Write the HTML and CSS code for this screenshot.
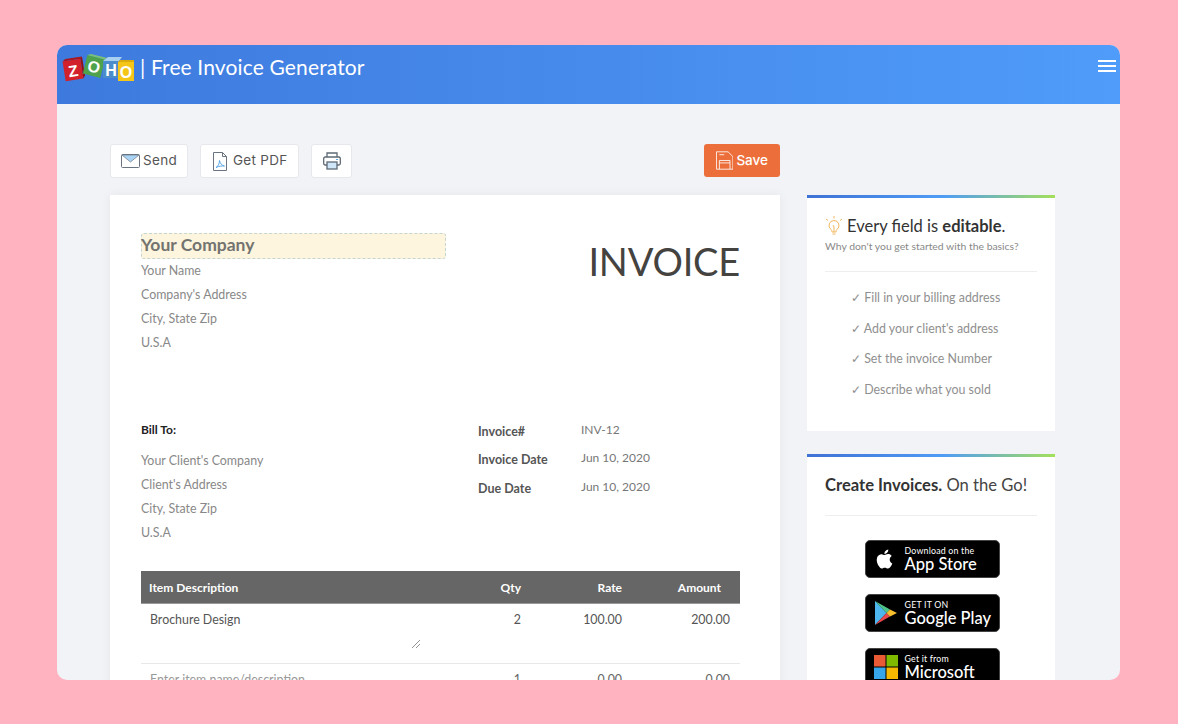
FILE: index.html
```html
<!DOCTYPE html>
<html lang="en">
<head>
<meta charset="utf-8">
<title>Free Invoice Generator</title>
<link rel="stylesheet" href="styles.css">
</head>
<body>
<div class="window">
  <header class="topbar">
    <div class="brand">
      <svg class="logo" width="72" height="30" viewBox="0 0 72 30">
        <g transform="rotate(-9 11 17)"><rect x="2" y="7" width="18" height="20" fill="#d3212c"/><path d="M2 7l3-2h17l-2 2z" fill="#a9161f"/><path d="M20 7l2-2v19l-2 3z" fill="#8f1219"/><text x="11" y="23.500" class="lt">Z</text></g>
        <g transform="rotate(14 32 13)"><rect x="23" y="4" width="18" height="19" fill="#4ea24c"/><path d="M23 4l3-2h17l-2 2z" fill="#7cc178"/><text x="32" y="19.500" class="lt">O</text></g>
        <rect x="41" y="8" width="16" height="17" fill="#4b8ccb"/><path d="M41 8l5-4h14l-3 4z" fill="#a8d0f0"/><text x="49" y="22.500" class="lt">H</text>
        <rect x="56" y="9" width="16" height="19" fill="#f5c518"/><path d="M56 9l2-2h14v2z" fill="#d9ab0d"/><text x="64" y="25" class="lt">O</text>
      </svg>
      <span class="product">| Free Invoice Generator</span>
    </div>
    <div class="burger"><i></i><i></i><i></i></div>
  </header>

  <main class="content">
    <div class="toolbar">
      <div class="actions">
        <button class="btn">
          <svg width="19" height="14" viewBox="0 0 19 14"><rect x=".5" y=".5" width="18" height="13" rx="1" fill="#fff" stroke="#6a7480"/><path d="M1 1l8.500 7L18 1z" fill="#a9d4f5" stroke="#6a7480" stroke-width=".7"/></svg>
          <span class="btn-label">Send</span>
        </button>
        <button class="btn btn-pdf">
          <svg width="14" height="19" viewBox="0 0 14 19"><path d="M.5.5h9l4 4v14H.5z" fill="#fff" stroke="#6a7480"/><path d="M9.500.5v4h4" fill="none" stroke="#6a7480"/><path d="M3 15.500c2-1 3.500-4 3.500-7 .5 3 2.500 5 5 5.500-2-.2-5.500 0-8.500 1.500z" fill="none" stroke="#5aa7e6"/></svg>
          <span class="btn-label">Get PDF</span>
        </button>
        <button class="btn btn-print" aria-label="Print">
          <svg width="18" height="18" viewBox="0 0 18 18"><path d="M4 5V1h10v4" fill="none" stroke="#5f6974" stroke-width="1.300"/><rect x=".7" y="5" width="16.600" height="8" rx="1.500" fill="#fff" stroke="#5f6974" stroke-width="1.300"/><rect x="4" y="10" width="10" height="7" fill="#cfe6f8" stroke="#5f6974" stroke-width="1.300"/><path d="M13 7.500h2" stroke="#5aa7e6"/></svg>
        </button>
      </div>
      <button class="btn-save">
        <svg width="18" height="19" viewBox="0 0 18 19"><path d="M.5.5h12l5 5v13H.5z" fill="none" stroke="#fff" stroke-opacity=".85"/><path d="M3.500 3.500h5" stroke="#fff" stroke-opacity=".85"/><path d="M3.500 18.500v-9h11v9M3.500 12h11" fill="none" stroke="#fff" stroke-opacity=".85"/></svg>
        <span class="btn-label">Save</span>
      </button>
    </div>

    <div class="columns">
      <article class="sheet">
        <section class="sheet-top">
          <div class="from">
            <div class="company">Your Company</div>
            <p>Your Name</p>
            <p>Company's Address</p>
            <p>City, State Zip</p>
            <p>U.S.A</p>
          </div>
          <h1 class="doc-title">INVOICE</h1>
        </section>

        <section class="sheet-mid">
          <div class="bill">
            <h2>Bill To:</h2>
            <p>Your Client's Company</p>
            <p>Client's Address</p>
            <p>City, State Zip</p>
            <p>U.S.A</p>
          </div>
          <dl class="meta">
            <dt>Invoice#</dt><dd>INV-12</dd>
            <dt>Invoice Date</dt><dd>Jun 10, 2020</dd>
            <dt>Due Date</dt><dd>Jun 10, 2020</dd>
          </dl>
        </section>

        <div class="table">
          <div class="row head">
            <span>Item Description</span><span class="num">Qty</span><span class="num">Rate</span><span class="num">Amount</span>
          </div>
          <div class="row item">
            <span>Brochure Design</span><span class="num">2</span><span class="num">100.00</span><span class="num">200.00</span>
            <svg class="grip" width="8" height="8" viewBox="0 0 8 8"><path d="M0 8l8-8M4 8l4-4" stroke="#777" stroke-width=".8"/></svg>
          </div>
          <div class="row item blank">
            <span>Enter item name/description</span><span class="num">1</span><span class="num">0.00</span><span class="num">0.00</span>
          </div>
        </div>
      </article>

      <aside class="side">
        <section class="panel tips">
          <div class="tip-head">
            <svg width="18" height="20" viewBox="0 0 18 20"><g fill="none" stroke="#f0b860" stroke-width="1"><path d="M9 4.500a5 5 0 0 0-3 9c.7.600 1 1.300 1 2.500h4c0-1.200.3-1.900 1-2.500a5 5 0 0 0-3-9z"/><path d="M7.500 18h3M9 16v-5l-1-2M9 0v2.500M1 3l2 1.500M17 3l-2 1.500"/></g></svg>
            <h3>Every field is <b>editable</b>.</h3>
          </div>
          <p class="sub">Why don't you get started with the basics?</p>
          <hr>
          <ul>
            <li>✓ Fill in your billing address</li>
            <li>✓ Add your client's address</li>
            <li>✓ Set the invoice Number</li>
            <li>✓ Describe what you sold</li>
          </ul>
        </section>

        <section class="panel go">
          <h3><b>Create Invoices.</b> On the Go!</h3>
          <hr>
          <div class="stores">
            <div class="store">
              <svg class="apple" width="20" height="24" viewBox="0 0 24 24"><path fill="#fff" d="M12.152 6.896c-.948 0-2.415-1.078-3.960-1.040-2.040.027-3.910 1.183-4.961 3.014-2.117 3.675-.546 9.103 1.519 12.090 1.013 1.454 2.208 3.090 3.792 3.039 1.520-.065 2.090-.987 3.935-.987 1.831 0 2.350.987 3.960.948 1.637-.026 2.676-1.480 3.676-2.948 1.156-1.688 1.636-3.325 1.662-3.415-.039-.013-3.182-1.221-3.220-4.857-.026-3.040 2.480-4.494 2.597-4.559-1.429-2.090-3.623-2.324-4.390-2.376-2-.156-3.675 1.090-4.610 1.090zM15.530 3.830c.843-1.012 1.400-2.427 1.245-3.830-1.207.052-2.662.805-3.532 1.818-.780.896-1.454 2.338-1.273 3.714 1.338.104 2.715-.688 3.559-1.701"/></svg>
              <div class="store-text"><small>Download on the</small><strong>App Store</strong></div>
            </div>
            <div class="store">
              <svg width="24" height="26" viewBox="0 0 24 26"><path d="M1 1l11.500 12L1 25z" fill="#4db6ee"/><path d="M1 1l15 8.500-3.500 3.500z" fill="#4fc48a"/><path d="M1 25l15-8.500-3.500-3.500z" fill="#e8474c"/><path d="M16 9.500l7 3.500-7 3.500-3.500-3.500z" fill="#f9bf2d"/></svg>
              <div class="store-text"><small>GET IT ON</small><strong>Google Play</strong></div>
            </div>
            <div class="store">
              <svg width="24" height="24" viewBox="0 0 24 24"><rect width="11.500" height="11.500" fill="#ea5a34"/><rect x="12.500" width="11.500" height="11.500" fill="#7fba00"/><rect y="12.500" width="11.500" height="11.500" fill="#36a5ea"/><rect x="12.500" y="12.500" width="11.500" height="11.500" fill="#f7b900"/></svg>
              <div class="store-text"><small>Get it from</small><strong>Microsoft</strong></div>
            </div>
          </div>
        </section>
      </aside>
    </div>
  </main>
</div>
</body>
</html>
```

FILE: styles.css
```css
* { box-sizing: border-box; }
html, body { margin: 0; height: 100%; }
body {
  background: #ffb3c0;
  padding: 45px 58px 44px 57px;
  font-family: "Lato", "Open Sans", sans-serif;
  overflow: hidden;
  color: #444;
}
.window {
  height: 635px;
  border-radius: 10px;
  overflow: hidden;
  background: #f1f3f6;
  display: flex;
  flex-direction: column;
}
.topbar {
  flex: 0 0 59px;
  background: linear-gradient(90deg, #3e7add 0%, #4f9cfa 100%);
  display: flex;
  justify-content: space-between;
  padding: 8px 4px 0 5px;
}
.brand { display: flex; align-items: flex-start; gap: 6px; }
.logo { flex: none; }
.lt { font: 700 16px "Liberation Sans", sans-serif; fill: #fff; text-anchor: middle; }
.product { color: #fff; font-size: 21px; line-height: 28px; letter-spacing: .14px; }
.burger { display: flex; flex-direction: column; gap: 3px; padding-top: 7px; width: 18px; }
.burger i { display: block; height: 2px; background: #fff; }

.content { flex: 1; padding: 40px 340px 0 53px; min-height: 0; overflow: hidden; width: 1063px; }
.toolbar { display: flex; justify-content: space-between; align-items: flex-start; height: 51px; width: 670px; }
.actions { display: flex; gap: 12px; }
.btn {
  height: 34px;
  background: #fff;
  border: 1px solid #e6e8ec;
  border-radius: 3px;
  display: flex;
  align-items: center;
  gap: 3px;
  padding: 0 10px;
  width: 78px;
  font: 400 13.500px "Inter", sans-serif;
  letter-spacing: .3px;
  color: #555;
  white-space: nowrap;
}
.btn-label { margin-top: -2px; }
.btn-pdf { width: 99px; gap: 6px; padding: 0 10px 0 12px; }
.btn-print { width: 41px; justify-content: center; padding: 0; }
.btn-save {
  width: 76px;
  height: 33px;
  background: #ec6f3b;
  border: 0;
  border-radius: 3px;
  color: #fff;
  display: flex;
  align-items: center;
  gap: 3px;
  padding: 0 12px;
  font: 500 13.500px "Inter", sans-serif;
}
.columns { display: flex; gap: 27px; width: 945px; align-items: flex-start; }
.sheet {
  flex: 0 0 670px;
  background: #fff;
  padding: 38px 40px 30px 31px;
  box-shadow: 0 0 10px rgba(0, 0, 0, .06);
}
.sheet p { margin: 0; font-size: 12.400px; line-height: 23.900px; color: #888; }
.sheet-top { display: flex; justify-content: space-between; height: 187px; }
.from { width: 305px; }
.company {
  height: 26px;
  background: #fdf5dd;
  border: 1px dashed #c5d5cf;
  border-radius: 3px;
  font-size: 17.500px;
  font-weight: 700;
  line-height: 22px;
  color: #737370;
  text-indent: -1px;
}
.doc-title { margin: 6px 0 0; font-size: 38px; font-weight: 400; line-height: 44px; color: #45433f; letter-spacing: -.2px; }
.sheet-mid { display: flex; height: 151px; }
.bill { width: 337px; }
.bill h2 { margin: 0 0 9px; font-size: 12px; line-height: 20px; font-weight: 700; color: #222; }
.meta {
  margin: 0;
  display: grid;
  grid-template-columns: 103px auto;
  grid-auto-rows: 28.300px;
  align-content: start;
}
.meta dt { font-size: 12.500px; font-weight: 700; color: #555; line-height: 24px; }
.meta dd { margin: 0; font-size: 12px; color: #777; line-height: 19px; }
.table { width: 599px; }
.row {
  display: grid;
  grid-template-columns: 1fr 60px 101px 108px;
  position: relative;
}
.head {
  height: 33px;
  background: #666;
  color: #fff;
  font-size: 12px;
  font-weight: 700;
  line-height: 33px;
  padding: 0 19px 0 8px;
  border-bottom: 1px solid #999;
  grid-template-columns: 1fr 60px 101px 99px;
}
.item {
  height: 60px;
  border-bottom: 1px solid #e8e8e8;
  padding: 7px 10px 0 9px;
  font-size: 12.400px;
  line-height: 18px;
  color: #555;
}
.blank { color: #666; }
.blank span:first-child { color: #999; }
.num { text-align: right; }
.grip { position: absolute; left: 271px; top: 36px; }

.side { flex: 0 0 248px; display: flex; flex-direction: column; gap: 23px; }
.panel {
  background: #fff;
  border-top: 3px solid;
  border-image: linear-gradient(90deg, #3f71d4 0%, #4f9cf5 55%, #a5e05a 100%) 1;
  padding: 0 18px;
}
.panel hr { border: 0; border-top: 1px solid #eee; margin: 0; }
.tips { height: 236px; padding-top: 17px; }
.tip-head { display: flex; align-items: center; gap: 4px; height: 22px; }
.tip-head h3 { margin: 0; font-size: 16.500px; font-weight: 400; color: #333; line-height: 22px; white-space: nowrap; }
.tip-head b { font-weight: 700; }
.sub { margin: 1px 0 17px; font-size: 10.400px; line-height: 16px; color: #888; white-space: nowrap; }
.tips ul { list-style: none; margin: 0; padding: 11px 0 0 26px; }
.tips li { font-size: 12.400px; line-height: 30.700px; color: #8f8f8f; }
.go { height: 300px; padding-top: 17px; }
.go h3 { margin: 0 0 19px; font-size: 16.600px; font-weight: 400; line-height: 22px; color: #444; white-space: nowrap; }
.go b { color: #333; font-weight: 700; }
.stores { display: flex; flex-direction: column; align-items: center; gap: 16px; padding: 24px 0 0 2px; }
.store {
  width: 135px;
  height: 38px;
  flex: none;
  background: #000;
  border: 1px solid #444;
  border-radius: 5px;
  color: #fff;
  display: flex;
  align-items: center;
  gap: 7px;
  padding-left: 8px;
}
.apple { margin: 0 4px 0 1px; width: 19px; }
.store-text { display: flex; flex-direction: column; }
.store small { font-size: 8.800px; line-height: 9px; letter-spacing: .2px; }
.store strong { font-size: 16.500px; line-height: 18px; font-weight: 500; }
```
